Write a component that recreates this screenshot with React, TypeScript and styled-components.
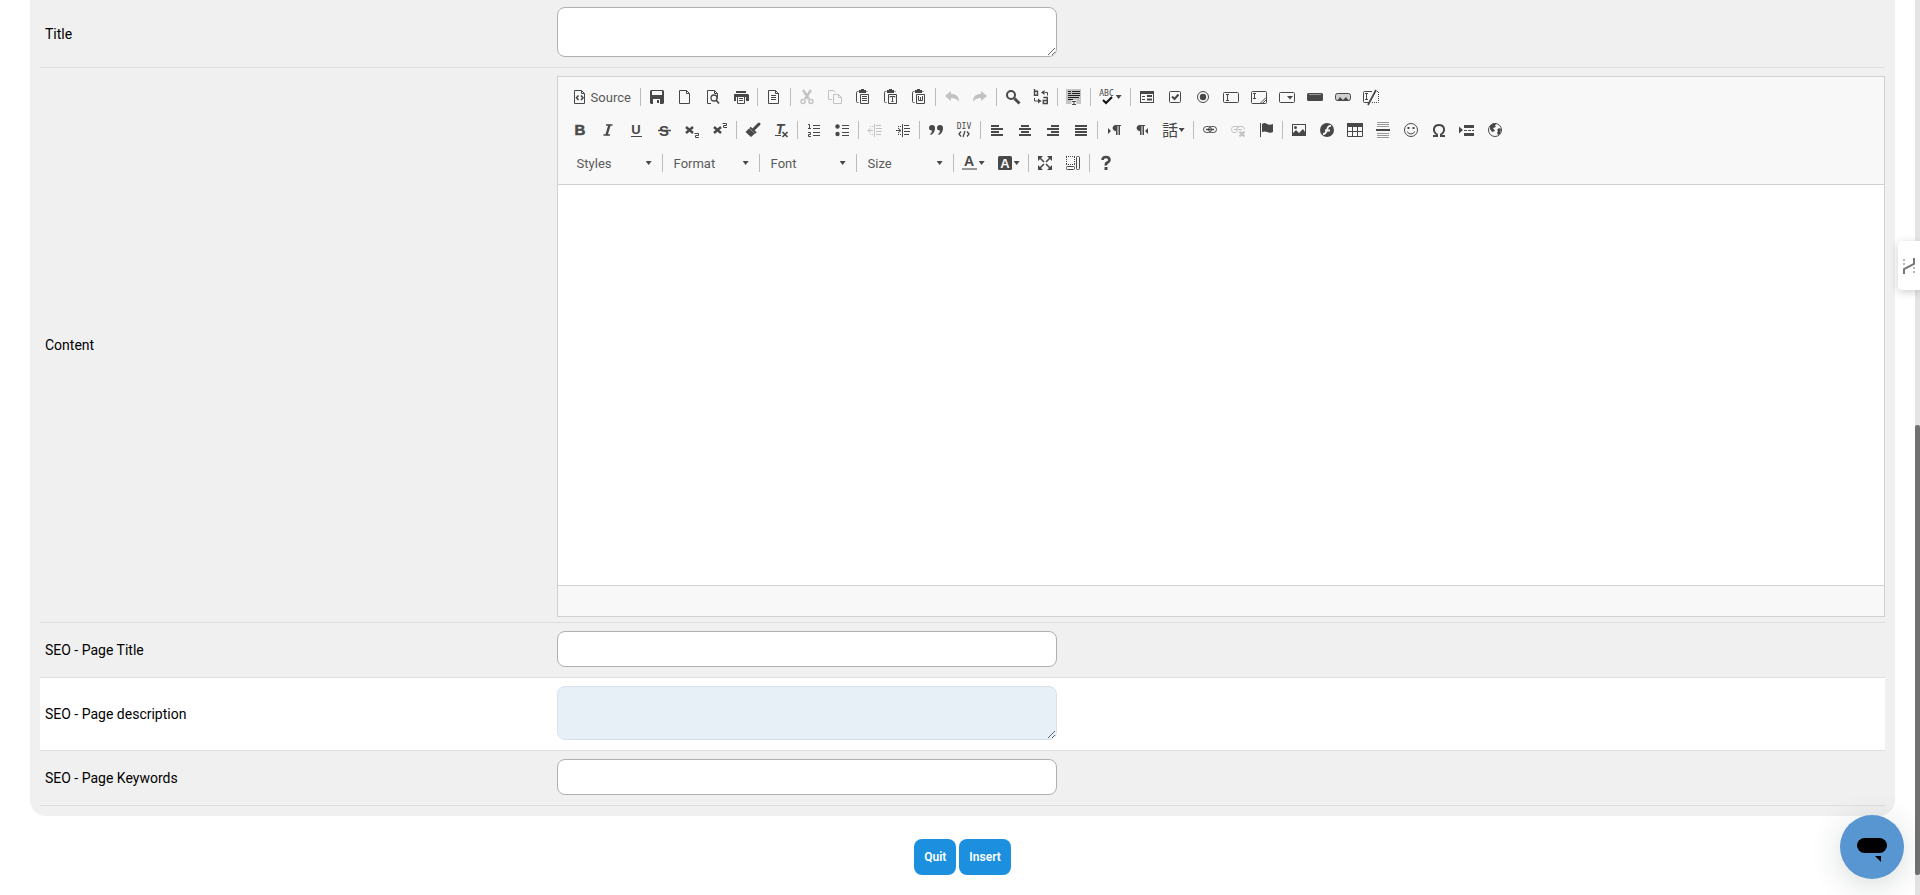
import React from "react";
import styled, { createGlobalStyle, css } from "styled-components";

const GlobalStyle = createGlobalStyle`
  *, *::before, *::after { box-sizing: border-box; }
  body {
    margin: 0;
    background: #fff;
    color: #000;
    font-family: Roboto, "Liberation Sans", sans-serif;
    font-size: 14px;
  }
`;

/* ---------- page layout ---------- */

const Page = styled.main`
  padding: 0 25px 20px 30px;
`;

const Card = styled.section`
  padding: 0 10px 10px;
  background: #f0f0f0;
  border-radius: 0 0 16px 16px;
`;

const Row = styled.div<{ $highlight?: boolean }>`
  display: grid;
  grid-template-columns: 28% minmax(0, 1fr);
  align-items: center;
  border-bottom: 1px solid #dedede;
  background: ${(p) => (p.$highlight ? "#fff" : "transparent")};
`;

const Label = styled.label`
  padding-left: 5px;
  font-size: 14px;
  line-height: 20px;
`;

const Field = styled.div<{ $first?: boolean; $tight?: boolean }>`
  padding: ${(p) => (p.$first ? 7 : 8)}px 0 ${(p) => (p.$tight ? 5 : 10)}px;
`;

const fieldStyle = css`
  display: block;
  width: 500px;
  max-width: 100%;
  margin: 0;
  padding: 8px 10px;
  border: 1px solid #b0b0b0;
  border-radius: 8px;
  background: #fff;
  font: inherit;
  outline: none;
`;

const TextInput = styled.input`
  ${fieldStyle}
  height: 36px;
`;

const TextArea = styled.textarea<{ $active?: boolean }>`
  ${fieldStyle}
  height: ${(p) => (p.$active ? 54 : 50)}px;
  ${(p) => p.$active && "background: #e7eff7; border-color: #d8e2ec;"}
`;

const Actions = styled.div`
  display: flex;
  justify-content: center;
  gap: 3px;
  padding-top: 23px;
`;

const ActionButton = styled.button`
  height: 36px;
  padding: 0 10px;
  border: 0;
  border-radius: 8px;
  background: #1c90df;
  color: #fff;
  font: 600 12px Roboto, "Liberation Sans", sans-serif;
`;

/* ---------- rich text editor ---------- */

const Editor = styled.div`
  border: 1px solid #d1d1d1;
  background: #fff;
`;

const Toolbar = styled.div`
  padding: 6px 8px 2px;
  background: #f8f8f8;
  border-bottom: 1px solid #d1d1d1;
`;

const ToolRow = styled.div`
  display: flex;
  flex-wrap: wrap;
  padding: 1px 0 6px;
`;

const ToolGroup = styled.div`
  display: flex;
  align-items: center;

  & + &::before {
    content: "";
    width: 1px;
    height: 18px;
    margin: 0 2px;
    background: #bcbcbc;
  }
`;

const ToolButton = styled.button`
  display: flex;
  align-items: center;
  height: 26px;
  padding: 0 6px;
  border: 0;
  background: none;
  color: #484848;
  font: 13px Roboto, "Liberation Sans", sans-serif;

  &:disabled { color: #484848; opacity: 0.3; }
`;

const ToolText = styled.span`
  padding-left: 3px;
  color: #5a5a5a;
  white-space: nowrap;
`;

const SourceButton = styled(ToolButton)`
  width: 72px;
`;

const Caret = styled.span`
  width: 6px;
  height: 4px;
  margin-left: 1px;
  background: #484848;
  clip-path: polygon(0 0, 100% 0, 50% 100%);
`;

const Combo = styled.div`
  display: flex;
  align-items: center;
  width: 92px;
  height: 26px;
  padding: 0 8px 0 9px;

  ${ToolGroup}:first-child > & { margin-left: 2px; }
`;

const ComboSelect = styled.select`
  flex: 1;
  min-width: 0;
  padding: 0;
  border: 0;
  appearance: none;
  background: none;
  color: #5a5a5a;
  font: 13px Roboto, "Liberation Sans", sans-serif;
`;

const EditArea = styled.textarea`
  display: block;
  width: 100%;
  height: 400px;
  padding: 20px;
  border: 0;
  resize: none;
  outline: none;
  font: inherit;
`;

const EditorFooter = styled.div`
  height: 31px;
  border-top: 1px solid #d1d1d1;
  background: #f8f8f8;
`;

/* ---------- floating parts ---------- */

const ScrollTrack = styled.div`
  position: fixed;
  top: 0;
  right: 0;
  bottom: 0;
  width: 5px;
  background: #e4e4e4;
`;

const ScrollThumb = styled.div`
  position: absolute;
  top: 425px;
  bottom: 20px;
  width: 5px;
  border-radius: 2px;
  background: #717171;
`;

const SideTab = styled.button`
  position: fixed;
  top: 241px;
  right: 0;
  width: 22px;
  height: 49px;
  padding: 0 0 0 5px;
  border: 0;
  border-radius: 4px 0 0 4px;
  background: #fff;
  box-shadow: 0 2px 8px rgba(0, 0, 0, 0.2);
`;

const ChatButton = styled.button`
  position: fixed;
  right: 16px;
  bottom: 16px;
  width: 64px;
  height: 64px;
  padding: 0;
  border: 0;
  border-radius: 50%;
  background: #5896d2;
  box-shadow: 0 6px 32px rgba(0, 40, 40, 0.16);
`;

const Glyph = styled.svg`
  display: block;
  flex: none;
  overflow: visible;
`;

/* ---------- icons, each on a 16 x 16 grid ---------- */

const page = <path d="M2.5 1.5h7l3 3v10h-10z M9.5 1.5v3h3" />;
const solid = { fill: "currentColor", stroke: "none" };
const letter = {
  ...solid,
  fontFamily: "Liberation Sans, sans-serif",
  fontWeight: 700,
  textAnchor: "middle" as const,
};
const tiny = { ...letter, fontFamily: "DejaVu Sans Mono, monospace", fontSize: 8 };
const clipboard = (
  <>
    <path d="M3.5 2.5h-1q-1 0-1 1v9q0 1 1 1h1M11.5 2.5h1" />
    <path {...solid} d="M4 1h2V0h3v1h2v3H4z" />
    <path d="M5.5 5.5h8v9h-8z" />
  </>
);

const icons: Record<string, React.ReactNode> = {
  source: <>{page}<path strokeWidth="1.6" d="M6.500 6.500l-2 2.300 2 2.200M9 6.500l2 2.300-2 2.200" /></>,
  save: <path {...solid} fillRule="evenodd" d="M2 1h12l1 1v12l-1 1H2l-1-1V2zM3 2v4h10V2zM4 10v5h7v-5zM8 11h2v3H8z" />,
  new: page,
  preview: <><path d="M6 14.500H2.500v-13h7l3 3v5M9.500 1.500v3h3" /><circle cx="9" cy="9" r="3" strokeWidth="1.300" /><path strokeWidth="1.800" d="M11 11l3 3.500" /></>,
  print: <><path {...solid} d="M3 2h10v2H3zM1 5h14l1 1v6h-3V8H3v4H1z" /><path d="M4.500 7.500h7v7h-7zM6 9.500h4M6 11.500h4" /></>,
  templates: <>{page}<path d="M5 6.500h5M5 8.500h5M5 10.500h5" /></>,
  cut: <><path strokeWidth="2.400" d="M4 1l6 9M12 1L6 10" /><circle cx="4" cy="12.500" r="2" strokeWidth="1.400" /><circle cx="12" cy="12.500" r="2" strokeWidth="1.400" /></>,
  copy: <><path d="M5 10.500H1.500v-9h5l2 2" /><path d="M6.500 5.500h5l3 3v6h-8zM11.500 5.500v3h3" /></>,
  paste: <>{clipboard}<path d="M7 7.500h5M7 9.500h5M7 11.500h5" /></>,
  pasteText: <>{clipboard}<path d="M7 8.500v-1h5v1M9.500 7.500v5M8.500 12.500h2" /></>,
  pasteWord: <>{clipboard}<path d="M7.500 7v4.500h4V7M9.500 8v4" /></>,
  undo: <path {...solid} d="M1 7l6-5v3c5 0 8 2 8 8-2-3-4-4-8-4v3z" />,
  redo: <path {...solid} d="M15 7L9 2v3c-5 0-8 2-8 8 2-3 4-4 8-4v3z" />,
  find: <><circle cx="6" cy="6" r="4" strokeWidth="2" /><path strokeWidth="3" d="M9.500 9.500l5 5" /></>,
  replace: <><path strokeWidth="1.400" d="M1.500 0v6.300h3v-4h-3M10.300 8.500h4v6h-4v-3h4" /><path d="M14.500 6.500V3.500h-3M1.500 9v3h4" /><path {...solid} d="M8 3.500l3.500-2.500v5zM8.500 12L5 9.500v5z" /></>,
  selectAll: <><path fill="#c4c4c4" stroke="none" d="M0 0h15v15H0z" /><path stroke="#222" d="M2 2.500h3M6 2.500h8M2 4.500h3M6 4.500h8M2 6.500h12M2 8.500h11M2 10.500h5" /><path stroke="#f8f8f8" strokeWidth="5" d="M8 11v4" /><path d="M6 12.500h4M8 12v3M6 15.500h4" /></>,
  spell: <><text {...tiny} x="7.5" y="7" fontWeight={400}>ABC</text><path stroke="#111" strokeWidth="2" d="M4 11l3 3 6-6" /></>,
  form: <><path {...solid} fillRule="evenodd" d="M1 2h14v12H1zM2 5v8h12V5z" /><path strokeWidth="2" d="M8 7h5M8 10.500h5" /><path d="M3 7.500h3M3 10.500h3" /></>,
  checkbox: <><rect x="2.500" y="2.500" width="11" height="11" rx="1" /><path strokeWidth="2" d="M5 7.500l2.500 2.500 4-4.500" /></>,
  radio: <><circle cx="8" cy="8" r="5.500" /><circle {...solid} cx="8" cy="8" r="3.200" /></>,
  textField: <><rect x=".5" y="3.500" width="15" height="10" rx="1" /><path d="M3 5.500h3M4.500 5.500v6M3 11.500h3" /></>,
  textarea: <><rect x=".5" y="2.500" width="15" height="12" rx="1" /><path d="M2 4.500h3M3.500 4.500v5M2 9.500h3M15 8.500l-6 6M15 11l-3 3" /></>,
  select: <><rect x=".5" y="3.500" width="15" height="10" rx="1" /><path {...solid} d="M8 7h6l-3 3.500z" /></>,
  button: <><rect {...solid} x="0" y="4" width="16" height="8" rx="1.500" /><path stroke="#999" d="M2 5.500h12" /></>,
  imageButton: <><rect x=".5" y="4.500" width="15" height="7" rx="2" fill="#d0d0d0" /><path {...solid} d="M2 12l3-4 3 3 3-3 3 4z" /></>,
  hidden: <><path d="M9 2.500H1.500q-1 0-1 1v9q0 1 1 1H6M2 4.500h3M3.500 4.500v6M2 10.500h3" /><path strokeWidth="1.700" d="M13 1L5 16" /><path strokeDasharray="1 1" d="M12 2.500h3.500v11H8" /></>,
  bold: <text {...letter} x="8" y="13" fontSize="15" stroke="currentColor" strokeWidth=".500">B</text>,
  italic: <><path strokeWidth="2.400" d="M9.500 3L6.500 13" /><path strokeWidth="1.400" d="M6 3h6.500M3.500 13H10" /></>,
  underline: <><text {...letter} x="8" y="12" fontSize="13">U</text><path d="M3 14.500h11" /></>,
  strike: <><text {...letter} x="8" y="13.500" fontSize="15">S</text><path strokeWidth="1.500" d="M2 8.500h13" /></>,
  sub: <><path strokeWidth="2.400" d="M2 5l7 6M9 5l-7 6" /><path d="M10.500 11.500h4v2h-3v2h3.500" /></>,
  sup: <><path strokeWidth="2.400" d="M2 5l7 6M9 5l-7 6" /><path d="M10.500 1.500h4v2h-3v2h3.500" /></>,
  brush: <><path strokeWidth="3" d="M8.500 7.500L14 2" strokeLinecap="round" /><path strokeWidth="2" d="M5 5.500l6 5.500" /><path {...solid} d="M4 6.500l6 5-4 3.500-5.500-5z" /></>,
  clear: <><text {...letter} x="7" y="12" fontSize="14" fontStyle="italic">T</text><path d="M2 13.500h6" /><path strokeWidth="1.600" d="M9.500 10l5 5M14.500 10l-5 5" /></>,
  ordered: <><path d="M2 2.500h1.500V7M2 6.500h3M2 10.500h2.500v2H2.500v2H5" /><path strokeWidth="1.200" d="M7 3.500h7M7 6.500h7M7 10.500h7M7 13.500h7" /></>,
  bullets: <><circle {...solid} cx="3.500" cy="4.500" r="2.200" /><circle {...solid} cx="3.500" cy="12" r="2.200" /><path strokeWidth="1.200" d="M8 3.500h7M8 6.500h7M8 10.500h7M8 13.500h7" /></>,
  outdent: <><path d="M7.500 2v13M9 3.500h5M9 6.500h6M9 9.500h6M9 12.500h5M1 8.500h5M3.500 6l-2.500 2.500L3.500 11" /><path strokeDasharray="1 1" d="M3 4.500h4M3 12.500h4" /></>,
  indent: <><path d="M7.500 2v13M9 3.500h5M9 6.500h6M9 9.500h6M9 12.500h5M1 8.500h5M3 6l3 2.500L3 11" /><path strokeDasharray="1 1" d="M3 4.500h4M3 12.500h4" /></>,
  quote: <path {...solid} d="M1 6a3 3 0 0 1 6 0q0 5-4 7l-1-1q2-1 2-3.500Q1 8.500 1 6zM9 6a3 3 0 0 1 6 0q0 5-4 7l-1-1q2-1 2-3.500Q9 8.500 9 6z" />,
  div: <><text {...tiny} x="8" y="7" fontWeight={400}>DIV</text><path strokeWidth="1.300" d="M5 9.500L3 12l2 2.500M11 9.500l2 2.500-2 2.500M9 9l-2 6" /></>,
  left: <path strokeWidth="2" d="M2 4h8M2 7h12M2 10h8M2 13h12" />,
  center: <path strokeWidth="2" d="M4 4h8M2 7h12M4 10h8M2 13h12" />,
  right: <path strokeWidth="2" d="M6 4h8M2 7h12M6 10h8M2 13h12" />,
  justify: <path strokeWidth="2" d="M2 4h12M2 7h12M2 10h12M2 13h12" />,
  ltr: <path {...solid} d="M2 6l3 3-3 3zM15 3v1h-1v9h-1.500V4h-1v9H10V9C5.500 9 5.500 3 10 3z" />,
  rtl: <path {...solid} d="M14 6l-3 3 3 3zM11 3v1h-1v9H8.500V4h-1v9H6V9C1.500 9 1.500 3 6 3z" />,
  language: <text {...letter} x="8" y="14" fontSize="16" fontWeight={400} fontFamily="Noto Sans CJK JP, sans-serif">話</text>,
  link: <><rect x="1.500" y="4.500" width="8" height="6" rx="3" /><rect x="6.500" y="4.500" width="8" height="6" rx="3" /><path strokeWidth="1.500" d="M4 7.500h8" /></>,
  unlink: <><path d="M9 5.500q-1-1-2-1H4q-2.500 0-2.500 3t2.500 3h2M8 10.500q-1.500-1-1.500-3t2.500-3h3q2.500 0 2.500 3M4 7.500h8" /><path strokeWidth="2" d="M9.500 9.500l5 5M14.500 9.500l-5 5" /></>,
  anchor: <path {...solid} d="M2 1h1v14H2zM4 2q3-2 5 0 2 1.500 6 0v8q-3 1.500-6 0-2-1-5 0z" />,
  image: <><rect x="1.500" y="2.500" width="13" height="11" /><path {...solid} d="M2 13v-2l3-3 3 3 4-4 2 3v3z" /><circle {...solid} cx="4.500" cy="5.500" r="1.500" /></>,
  flash: <><circle {...solid} cx="8" cy="8" r="7" /><path stroke="#f8f8f8" strokeWidth="1.800" d="M12 4q-3-.5-4 4-1 4-4 4M6 8.500h5" /></>,
  table: <><path {...solid} d="M0 1h16v4H0z" /><path d="M.5 1.500h15v13H.5zM.5 9.500h15M5.500 5v10M10.500 5v10" /></>,
  rule: <><path stroke="#999" d="M2 .5h12M2 2.500h12M2 4.500h12M2 11.500h12M2 13.500h12M2 15.500h12" /><path strokeWidth="2" d="M1 8h14" /></>,
  smiley: <><circle cx="8" cy="8" r="6.500" /><path strokeWidth="2" d="M5.500 5v2M10.500 5v2" /><path d="M4 9.500q4 5 8 0" /></>,
  omega: <path strokeWidth="2" d="M2 14h4v-1.500C1 9 2.500 3 8 3s7 6 2 9.500V14h4" />,
  pageBreak: <><path {...solid} d="M0 4.500l4 3.500-4 3.500zM5 3h10v3H5zM5 11h10v3H5z" /><path strokeDasharray="3 1" d="M5 8.500h10" /></>,
  globe: <><circle cx="8" cy="8" r="6.500" /><path {...solid} d="M3 4l3-2.500 3 .5-1 2 1 1-3 1 2 3-3 1-2-3zM12 6l2 1-1 5-2 1-1-2 1-2-1-1z" /></>,
  textColor: <><text {...letter} x="7" y="11" fontSize="14">A</text><path stroke="#999" strokeWidth="2" d="M0 14h15" /></>,
  bgColor: <><rect {...solid} x="1" y="1" width="14" height="14" rx="1.500" /><text {...letter} x="8" y="13" fontSize="13" fill="#f8f8f8">A</text></>,
  maximize: <><path strokeWidth="1.600" d="M3 3l4 4M13 3L9 7M3 13l4-4M13 13L9 9" /><path {...solid} d="M1 1h5L1 6zM15 1v5l-5-5zM1 15v-5l5 5zM15 15h-5l5-5z" /></>,
  blocks: <><rect x="11.500" y="1.500" width="3" height="13" rx="1" /><rect x="1.500" y="11.500" width="8" height="3" rx="1" /><path strokeDasharray="1 1" d="M1 1.500h9M9.500 2v8M1 9.500h9M1.500 2v8" /></>,
  about: <><path strokeWidth="2.600" d="M4.500 5q0-3 3.500-3t3.500 3q0 1.500-2 2.500T8 10.500" /><rect {...solid} x="6.500" y="12" width="3" height="3" /></>,
};

const Icon = ({ name }: { name: string }) => (
  <Glyph width="16" height="16" viewBox="0 0 16 16" fill="none" stroke="currentColor" aria-hidden="true">
    {icons[name]}
  </Glyph>
);

type Tool = { icon: string; label: string; off?: boolean; menu?: boolean };
const t = (icon: string, label: string, extra: Partial<Tool> = {}): Tool => ({ icon, label, ...extra });

const firstRow: Tool[][] = [
  [t("save", "Save"), t("new", "New Page"), t("preview", "Preview"), t("print", "Print")],
  [t("templates", "Templates")],
  [
    t("cut", "Cut", { off: true }),
    t("copy", "Copy", { off: true }),
    t("paste", "Paste"),
    t("pasteText", "Paste as plain text"),
    t("pasteWord", "Paste from Word"),
  ],
  [t("undo", "Undo", { off: true }), t("redo", "Redo", { off: true })],
  [t("find", "Find"), t("replace", "Replace")],
  [t("selectAll", "Select All")],
  [t("spell", "Spell Check", { menu: true })],
  [
    t("form", "Form"),
    t("checkbox", "Checkbox"),
    t("radio", "Radio Button"),
    t("textField", "Text Field"),
    t("textarea", "Textarea"),
    t("select", "Selection Field"),
    t("button", "Button"),
    t("imageButton", "Image Button"),
    t("hidden", "Hidden Field"),
  ],
];

const secondRow: Tool[][] = [
  [
    t("bold", "Bold"),
    t("italic", "Italic"),
    t("underline", "Underline"),
    t("strike", "Strikethrough"),
    t("sub", "Subscript"),
    t("sup", "Superscript"),
  ],
  [t("brush", "Copy Formatting"), t("clear", "Remove Format")],
  [t("ordered", "Numbered List"), t("bullets", "Bulleted List")],
  [t("outdent", "Decrease Indent", { off: true }), t("indent", "Increase Indent")],
  [t("quote", "Block Quote"), t("div", "Create Div Container")],
  [t("left", "Align Left"), t("center", "Center"), t("right", "Align Right"), t("justify", "Justify")],
  [t("ltr", "Left to Right"), t("rtl", "Right to Left"), t("language", "Set Language", { menu: true })],
  [t("link", "Link"), t("unlink", "Unlink", { off: true }), t("anchor", "Anchor")],
  [
    t("image", "Image"),
    t("flash", "Flash"),
    t("table", "Table"),
    t("rule", "Horizontal Line"),
    t("smiley", "Smiley"),
    t("omega", "Special Character"),
    t("pageBreak", "Page Break"),
    t("globe", "IFrame"),
  ],
];

const lastRow: Tool[][] = [
  [t("textColor", "Text Color", { menu: true }), t("bgColor", "Background Color", { menu: true })],
  [t("maximize", "Maximize"), t("blocks", "Show Blocks")],
  [t("about", "About")],
];

const Groups = ({ groups }: { groups: Tool[][] }) => (
  <>
    {groups.map((group) => (
      <ToolGroup key={group[0].icon}>
        {group.map((tool) => (
          <ToolButton key={tool.icon} type="button" aria-label={tool.label} disabled={tool.off}>
            <Icon name={tool.icon} />
            {tool.menu && <Caret />}
          </ToolButton>
        ))}
      </ToolGroup>
    ))}
  </>
);

const RichTextEditor = () => (
  <Editor>
    <Toolbar role="toolbar" aria-label="Editor toolbar">
      <ToolRow>
        <ToolGroup>
          <SourceButton type="button">
            <Icon name="source" />
            <ToolText>Source</ToolText>
          </SourceButton>
        </ToolGroup>
        <Groups groups={firstRow} />
      </ToolRow>
      <ToolRow>
        <Groups groups={secondRow} />
      </ToolRow>
      <ToolRow>
        {["Styles", "Format", "Font", "Size"].map((name) => (
          <ToolGroup key={name}>
            <Combo>
              <ComboSelect aria-label={name}>
                <option>{name}</option>
              </ComboSelect>
              <Caret />
            </Combo>
          </ToolGroup>
        ))}
        <Groups groups={lastRow} />
      </ToolRow>
    </Toolbar>
    <EditArea id="content" />
    <EditorFooter />
  </Editor>
);

export default function App() {
  return (
    <>
      <GlobalStyle />
      <Page>
        <form onSubmit={(e) => e.preventDefault()}>
          <Card>
            <Row>
              <Label htmlFor="title">Title</Label>
              <Field $first>
                <TextArea id="title" />
              </Field>
            </Row>
            <Row>
              <Label htmlFor="content">Content</Label>
              <Field $tight>
                <RichTextEditor />
              </Field>
            </Row>
            <Row>
              <Label htmlFor="seo-title">SEO - Page Title</Label>
              <Field>
                <TextInput id="seo-title" type="text" />
              </Field>
            </Row>
            <Row $highlight>
              <Label htmlFor="seo-description">SEO - Page description</Label>
              <Field>
                <TextArea id="seo-description" $active />
              </Field>
            </Row>
            <Row>
              <Label htmlFor="seo-keywords">SEO - Page Keywords</Label>
              <Field>
                <TextInput id="seo-keywords" type="text" />
              </Field>
            </Row>
          </Card>
          <Actions>
            <ActionButton type="button">Quit</ActionButton>
            <ActionButton type="submit">Insert</ActionButton>
          </Actions>
        </form>
      </Page>
      <ScrollTrack>
        <ScrollThumb />
      </ScrollTrack>
      <SideTab type="button" aria-label="Open side panel">
        <Glyph width="12" height="18" viewBox="0 0 12 18" fill="none" aria-hidden="true">
          <path stroke="#777" strokeWidth="2" d="M1 17v-5l10-5V1" />
          <path stroke="#b5b5b5" strokeWidth="2" strokeDasharray="2 2" d="M1 2v8M11 10v8" />
        </Glyph>
      </SideTab>
      <ChatButton type="button" aria-label="Open chat">
        <Glyph width="64" height="64" viewBox="0 0 64 64" aria-hidden="true">
          <rect x="17" y="23" width="30" height="15" rx="7.500" />
          <path d="M35 41h6v6z" />
        </Glyph>
      </ChatButton>
    </>
  );
}
